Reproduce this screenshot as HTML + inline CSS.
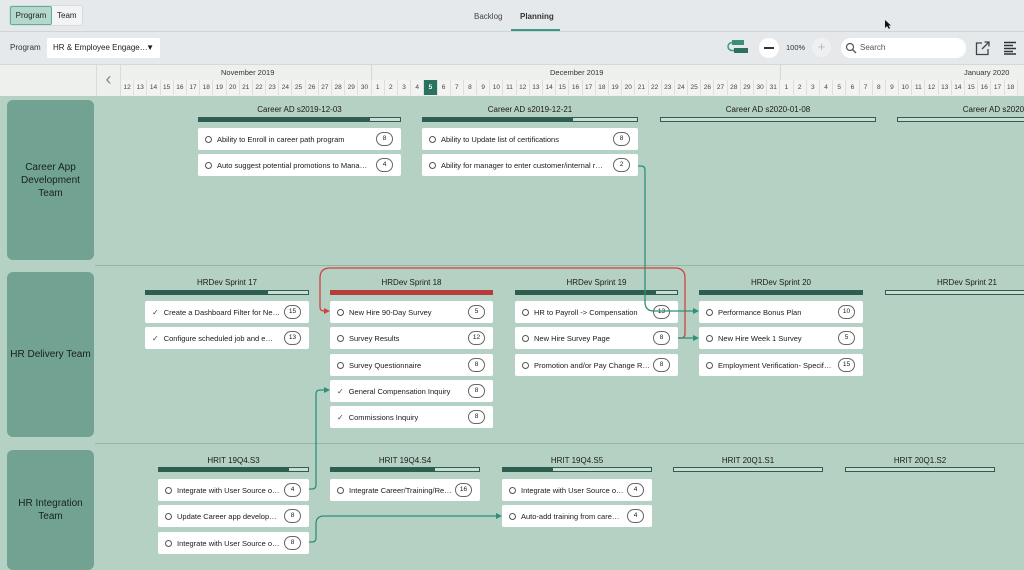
<!DOCTYPE html>
<html><head><meta charset="utf-8"><style>
*{box-sizing:border-box;margin:0;padding:0}
body{width:1024px;height:566px;overflow:hidden;font-family:"Liberation Sans",sans-serif;background:#b5d1c4;position:relative;color:#222}
.a{position:absolute}
.top{left:0;top:0;width:1024px;height:32px;background:#e6e9ec;border-bottom:1px solid #cfd4d6}
.tb{left:0;top:32px;width:1024px;height:33px;background:#e6e9ec;border-bottom:1px solid #d4d8d8}
.tl{left:0;top:65px;width:1024px;height:31px;background:#eef0ed}
.days{left:121px;top:80px;display:flex;height:15px}
.days span{width:13.2px;font-size:6.5px;text-align:center;line-height:15px;color:#444;border-right:1px solid #dde0dc;background:#f3f4f2}
.days span.t{background:#2a7360;color:#fff;font-weight:bold}
.mo{font-size:7.5px;color:#333;top:68px}
.team{left:7px;width:87px;background:#72a291;border-radius:6px;display:flex;align-items:center;justify-content:center;text-align:center;font-size:10px;color:#16211d;line-height:13px}
.sep{left:95px;width:929px;height:1px;background:#94b6a7}
.st{font-size:8px;color:#1a1a1a;text-align:center}
.bar{height:5px;border:1px solid #2d5e51;background:#c9ddd4}
.bar i{display:block;height:100%;background:#2d5e51}
.c{background:#fff;border-radius:2px;height:22px;font-size:7.5px;display:flex;align-items:center;padding-left:7px;padding-right:30px;color:#1a1a1a;white-space:nowrap;overflow:hidden}
.c b{font-weight:normal;display:inline-block;width:7px;height:7px;border:1px solid #555;border-radius:50%;margin-right:5px;flex:none}
.c em{font-style:normal;margin-right:5px;font-size:8px;color:#444}
.c u{text-decoration:none;position:absolute;right:8px;top:4px;width:17px;height:14px;border:1px solid #666;border-radius:7px;font-size:6.5px;text-align:center;line-height:12px}
</style></head><body>
<div class="a top"></div>
<div class="a" style="left:9px;top:5px;width:74px;height:21px;background:#f3f4f5;border:1px solid #d8dcdc;border-radius:3px"></div>
<div class="a" style="left:10px;top:6px;width:42px;height:19px;background:#b4d8cb;border:1px solid #5fae95;border-radius:2px;font-size:8px;line-height:17px;text-align:center">Program</div>
<div class="a" style="left:57px;top:6px;font-size:8px;line-height:19px">Team</div>
<div class="a" style="left:474px;top:12px;font-size:8px;color:#444">Backlog</div>
<div class="a" style="left:520px;top:12px;font-size:8px;font-weight:bold;color:#333">Planning</div>
<div class="a" style="left:511px;top:29px;width:49px;height:2px;background:#3b9a83"></div>
<svg class="a" style="left:884px;top:19px" width="8" height="11"><path d="M1 1 V9 L3 7 L5 10 L6 9 L4.5 6.5 L7 6.5Z" fill="#111"/></svg>
<div class="a tb"></div>
<div class="a" style="left:10px;top:43px;font-size:8px;color:#333">Program</div>
<div class="a" style="left:47px;top:38px;width:113px;height:20px;background:#fff;border-radius:2px;font-size:8px;line-height:20px;padding-left:6px">HR &amp; Employee Engage… <span style="position:absolute;right:6px;font-size:8px">▼</span></div>
<svg class="a" style="left:726px;top:38px" width="22" height="18"><rect x="6" y="2" width="12" height="5" fill="#3b8f78"/><rect x="8" y="10" width="14" height="5" fill="#2f6f5f"/><path d="M6 4.5 A4 4 0 0 0 6 12.5 L8 12.5" stroke="#3b9a83" stroke-width="1.5" fill="none"/></svg>
<div class="a" style="left:759px;top:38px;width:20px;height:20px;border-radius:50%;background:#fff"></div>
<div class="a" style="left:764px;top:47px;width:10px;height:2px;background:#333"></div>
<div class="a" style="left:786px;top:43px;font-size:7.5px;color:#333">100%</div>
<div class="a" style="left:812px;top:38px;width:19px;height:19px;border-radius:50%;background:#eef0f1;color:#bbb;font-size:13px;text-align:center;line-height:18px">+</div>
<div class="a" style="left:841px;top:38px;width:125px;height:20px;border-radius:10px;background:#fff;font-size:8px;color:#555;line-height:20px;padding-left:19px">Search</div>
<svg class="a" style="left:845px;top:42px" width="12" height="12"><circle cx="5" cy="5" r="3.5" stroke="#555" fill="none" stroke-width="1.2"/><path d="M7.5 7.5 L11 11" stroke="#555" stroke-width="1.3"/></svg>
<svg class="a" style="left:975px;top:40px" width="16" height="16"><path d="M7 3 H1.5 V14.5 H13 V9" stroke="#444" fill="none" stroke-width="1.3"/><path d="M7 9 L14 2 M9.5 2 H14 V6.5" stroke="#444" fill="none" stroke-width="1.3"/></svg>
<svg class="a" style="left:1003px;top:41px" width="14" height="14"><path d="M1 1.5H13M1 4.5H10M1 7.5H13M1 10.5H10M1 13H13" stroke="#333" stroke-width="1.5"/></svg>
<div class="a tl"></div>
<div class="a" style="left:96px;top:65px;width:25px;height:31px;border-left:1px solid #d9dcd8;border-right:1px solid #d9dcd8;font-size:18px;color:#888;text-align:center;line-height:28px">‹</div>
<div class="a" style="left:371px;top:65px;width:1px;height:15px;background:#d4d7d3"></div>
<div class="a" style="left:780px;top:65px;width:1px;height:15px;background:#d4d7d3"></div>
<div class="a mo" style="left:221px">November 2019</div>
<div class="a mo" style="left:550px">December 2019</div>
<div class="a mo" style="left:964px">January 2020</div>
<div class="a days">
<span>12</span><span>13</span><span>14</span><span>15</span><span>16</span><span>17</span><span>18</span><span>19</span><span>20</span><span>21</span><span>22</span><span>23</span><span>24</span><span>25</span><span>26</span><span>27</span><span>28</span><span>29</span><span>30</span>
<span>1</span><span>2</span><span>3</span><span>4</span><span class="t">5</span><span>6</span><span>7</span><span>8</span><span>9</span><span>10</span><span>11</span><span>12</span><span>13</span><span>14</span><span>15</span><span>16</span><span>17</span><span>18</span><span>19</span><span>20</span><span>21</span><span>22</span><span>23</span><span>24</span><span>25</span><span>26</span><span>27</span><span>28</span><span>29</span><span>30</span><span>31</span>
<span>1</span><span>2</span><span>3</span><span>4</span><span>5</span><span>6</span><span>7</span><span>8</span><span>9</span><span>10</span><span>11</span><span>12</span><span>13</span><span>14</span><span>15</span><span>16</span><span>17</span><span>18</span>
</div>

<div class="a team" style="top:100px;height:160px">Career App<br>Development<br>Team</div>
<div class="a team" style="top:272px;height:165px">HR Delivery Team</div>
<div class="a team" style="top:450px;height:120px">HR Integration<br>Team</div>
<div class="a sep" style="top:265px"></div>
<div class="a sep" style="top:443px"></div>

<div class="a st" style="left:198px;top:105px;width:203px">Career AD s2019-12-03</div>
<div class="a bar" style="left:198px;top:117px;width:203px"><i style="width:85%"></i></div>
<div class="a c" style="left:198px;top:128px;width:203px"><b></b>Ability to Enroll in career path program<u>8</u></div>
<div class="a c" style="left:198px;top:154px;width:203px"><b></b>Auto suggest potential promotions to Mana…<u>4</u></div>
<div class="a st" style="left:422px;top:105px;width:216px">Career AD s2019-12-21</div>
<div class="a bar" style="left:422px;top:117px;width:216px"><i style="width:70%"></i></div>
<div class="a c" style="left:422px;top:128px;width:216px"><b></b>Ability to Update list of certifications<u>8</u></div>
<div class="a c" style="left:422px;top:154px;width:216px"><b></b>Ability for manager to enter customer/internal r…<u>2</u></div>
<div class="a st" style="left:660px;top:105px;width:216px">Career AD s2020-01-08</div>
<div class="a bar" style="left:660px;top:117px;width:216px"></div>
<div class="a st" style="left:897px;top:105px;width:216px">Career AD s2020-01-26</div>
<div class="a bar" style="left:897px;top:117px;width:216px"></div>

<div class="a st" style="left:145px;top:278px;width:164px">HRDev Sprint 17</div>
<div class="a bar" style="left:145px;top:290px;width:164px"><i style="width:75%"></i></div>
<div class="a c" style="left:145px;top:301px;width:164px"><em>✓</em>Create a Dashboard Filter for Ne…<u>15</u></div>
<div class="a c" style="left:145px;top:327px;width:164px"><em>✓</em>Configure scheduled job and e…<u>13</u></div>
<div class="a st" style="left:330px;top:278px;width:163px">HRDev Sprint 18</div>
<div class="a bar" style="left:330px;top:290px;width:163px;background:#b63b3b;border-color:#b63b3b"></div>
<div class="a c" style="left:330px;top:301px;width:163px"><b></b>New Hire 90-Day Survey<u>5</u></div>
<div class="a c" style="left:330px;top:327px;width:163px"><b></b>Survey Results<u>12</u></div>
<div class="a c" style="left:330px;top:354px;width:163px"><b></b>Survey Questionnaire<u>8</u></div>
<div class="a c" style="left:330px;top:380px;width:163px"><em>✓</em>General Compensation Inquiry<u>8</u></div>
<div class="a c" style="left:330px;top:406px;width:163px"><em>✓</em>Commissions Inquiry<u>8</u></div>
<div class="a st" style="left:515px;top:278px;width:163px">HRDev Sprint 19</div>
<div class="a bar" style="left:515px;top:290px;width:163px"><i style="width:87%"></i></div>
<div class="a c" style="left:515px;top:301px;width:163px"><b></b>HR to Payroll -&gt; Compensation<u>13</u></div>
<div class="a c" style="left:515px;top:327px;width:163px"><b></b>New Hire Survey Page<u>8</u></div>
<div class="a c" style="left:515px;top:354px;width:163px"><b></b>Promotion and/or Pay Change R…<u>8</u></div>
<div class="a st" style="left:699px;top:278px;width:164px">HRDev Sprint 20</div>
<div class="a bar" style="left:699px;top:290px;width:164px"><i style="width:100%"></i></div>
<div class="a c" style="left:699px;top:301px;width:164px"><b></b>Performance Bonus Plan<u>10</u></div>
<div class="a c" style="left:699px;top:327px;width:164px"><b></b>New Hire Week 1 Survey<u>5</u></div>
<div class="a c" style="left:699px;top:354px;width:164px"><b></b>Employment Verification- Specif…<u>15</u></div>
<div class="a st" style="left:885px;top:278px;width:164px">HRDev Sprint 21</div>
<div class="a bar" style="left:885px;top:290px;width:164px"></div>

<div class="a st" style="left:158px;top:456px;width:151px">HRIT 19Q4.S3</div>
<div class="a bar" style="left:158px;top:467px;width:151px"><i style="width:87%"></i></div>
<div class="a c" style="left:158px;top:479px;width:151px"><b></b>Integrate with User Source o…<u>4</u></div>
<div class="a c" style="left:158px;top:505px;width:151px"><b></b>Update Career app develop…<u>8</u></div>
<div class="a c" style="left:158px;top:532px;width:151px"><b></b>Integrate with User Source o…<u>8</u></div>
<div class="a st" style="left:330px;top:456px;width:150px">HRIT 19Q4.S4</div>
<div class="a bar" style="left:330px;top:467px;width:150px"><i style="width:70%"></i></div>
<div class="a c" style="left:330px;top:479px;width:150px"><b></b>Integrate Career/Training/Re…<u>16</u></div>
<div class="a st" style="left:502px;top:456px;width:150px">HRIT 19Q4.S5</div>
<div class="a bar" style="left:502px;top:467px;width:150px"><i style="width:34%"></i></div>
<div class="a c" style="left:502px;top:479px;width:150px"><b></b>Integrate with User Source o…<u>4</u></div>
<div class="a c" style="left:502px;top:505px;width:150px"><b></b>Auto-add training from care…<u>4</u></div>
<div class="a st" style="left:673px;top:456px;width:150px">HRIT 20Q1.S1</div>
<div class="a bar" style="left:673px;top:467px;width:150px"></div>
<div class="a st" style="left:845px;top:456px;width:150px">HRIT 20Q1.S2</div>
<div class="a bar" style="left:845px;top:467px;width:150px"></div>

<svg class="a" style="left:0;top:0" width="1024" height="566">
<g fill="none" stroke-width="1.3">
<path d="M638 166 H641 Q645 166 645 170 V302 Q645 311 654 311 H694" stroke="#2b8f7a"/>
<path d="M678 338 H681 Q685 338 685 334 V278 Q685 268 675 268 H330 Q320 268 320 278 V307 Q320 311 324 311 H326" stroke="#d0423e"/>
<path d="M678 338 H694" stroke="#2b8f7a"/>
<path d="M309 489 H312 Q316 489 316 485 V394 Q316 390 320 390 H326" stroke="#2b8f7a"/>
<path d="M309 542 H312 Q316 542 316 538 V524 Q316 516 324 516 H497" stroke="#2b8f7a"/>
</g>
<g fill="#2b8f7a"><path d="M699 311 L693 308 V314Z"/><path d="M699 338 L693 335 V341Z"/><path d="M330 390 L324 387 V393Z"/><path d="M502 516 L496 513 V519Z"/></g>
<path d="M330 311 L324 308 V314Z" fill="#d0423e"/>
</svg>
</body></html>
